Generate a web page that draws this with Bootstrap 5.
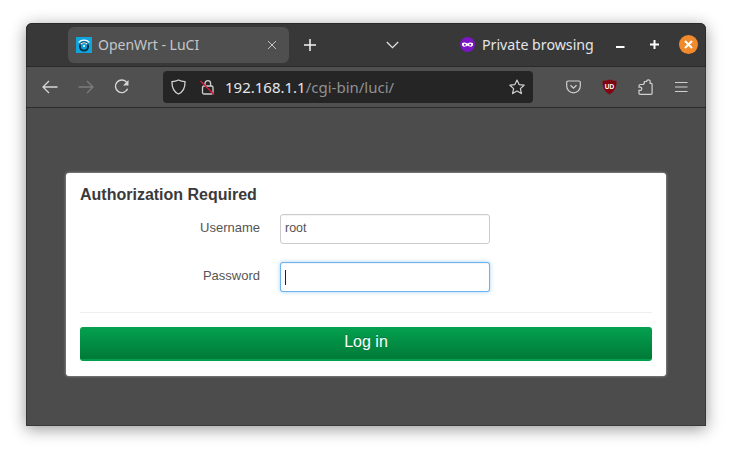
<!DOCTYPE html>
<html lang="en">
<head>
<meta charset="utf-8">
<title>OpenWrt - LuCI</title>
<link rel="stylesheet" href="https://cdn.jsdelivr.net/npm/bootstrap@5.3.0/dist/css/bootstrap.min.css">
<style>
html,body{height:100%;background:#fff;overflow:hidden}
body{padding:23px 26px 28px;font-family:"Liberation Sans",Arial,sans-serif}
.win{width:680px;height:403px;border-radius:6px 6px 0 0;box-shadow:0 3px 16px rgba(0,0,0,.42);overflow:hidden;background:#4c4c4c;outline:1px solid rgba(0,0,0,.25);outline-offset:-1px}
.tabbar{height:44px;background:#383838;padding:4px 8px 4px 42px;border-bottom:1px solid #2a2a2a;font-family:"Noto Sans","Open Sans",sans-serif}
.tabbar>*,.toolbar>*{flex-shrink:0}
.tabx{width:221px;height:36px;background:#4f4f4f;border-radius:6px;padding:0 12px 0 8px;color:#c4c6c8;font-size:14px}
.tabx svg.fav{margin-right:6px}
.plus{margin-left:15px}
.chev{margin-left:70px}
.priv{margin-left:61px;color:#e3e5e7;font-size:14.2px;gap:7px;width:135px}
.wctl{margin-left:21px}
.wbtn{width:34px;flex-shrink:0}
.closeb{width:19px;height:19px;border-radius:50%;background:#f08a2c;margin-left:-5px;flex-shrink:0}
.toolbar{height:41px;background:#505050;border-bottom:1px solid #2b2b2b}
.navgroup{width:137px;padding-left:16px;gap:20px}
.navgroup svg{flex-shrink:0}
.urlbar{width:370px;height:32px;background:#252525;border-radius:4px;padding:0 8px;font-family:"Noto Sans","Open Sans",sans-serif;font-size:15px;color:#8f9194}
.urlbar b{font-weight:400;color:#e6e7e9}
.urlbar svg{flex-shrink:0}
.urlbar svg.sh{margin-right:14px}
.urlbar svg.lk{margin-right:10px}
.tools{margin-left:33px}
.tools span{width:36px;flex-shrink:0}
.pane{height:318px;padding:65px 40px 0;background:#4c4c4c}
.auth{height:203px;background:#fff;border-radius:3px;padding:14px;box-shadow:0 0 3px rgba(255,255,255,.55);color:#404040}
.auth h3{font-size:16px;line-height:15px;font-weight:700;margin:0 0 12px;color:#3a3a3a}
.frow{height:30px;margin-bottom:18px;font-size:12.5px}
.lab{width:180px;text-align:right;color:#555;font-size:13px;padding-bottom:2px}
.fieldw{width:210px;margin-left:20px}
.auth .form-control{height:30px;border-radius:3px;padding:0 4px 2px;font-size:12.5px;color:#555;border-color:#ccc;font-family:inherit;min-height:0;box-shadow:inset 0 1px 1px rgba(0,0,0,.05)}
.auth .form-control.foc{border-color:rgba(82,168,236,.8);box-shadow:inset 0 1px 1px rgba(0,0,0,.05),0 0 4px rgba(82,168,236,.5)}
.caretx{position:absolute;left:5px;top:8px;width:1px;height:15px;background:#222}
.sep{margin:20px 0 14px;border:0;border-top:1px solid #eee;opacity:1;height:0}
.logbtn{width:100%;height:34px;padding:0 0 2px;border-radius:3px;border:0;color:#fff;font-size:16px;background:linear-gradient(#04a150,#007a38);border-bottom:2px solid #01a04f;text-shadow:0 -1px 0 rgba(0,0,0,.2)}
.logbtn:hover{color:#fff}
</style>
</head>
<body>
<div class="win d-flex flex-column">
  <div class="tabbar d-flex align-items-center">
    <div class="tabx d-flex align-items-center">
      <svg class="fav" width="16" height="16" viewBox="0 0 16 16"><rect width="16" height="16" fill="#10a4dc"/><circle cx="8" cy="9.6" r="4.4" fill="#0b4666" stroke="#082b40" stroke-width="1.2"/><circle cx="8" cy="9.6" r="3" fill="#0fa0d6"/><path d="M2.6 5.4C5.5 2.4 10.5 2.4 13.4 5.4M4.6 7.2C6.5 5.4 9.5 5.4 11.4 7.2" fill="none" stroke="#fff" stroke-width="1.3"/><circle cx="8" cy="9" r="1.1" fill="#fff"/></svg>
      <span class="flex-grow-1">OpenWrt - LuCI</span>
      <svg width="10" height="10" viewBox="0 0 10 10"><path d="M1 1l8 8M9 1l-8 8" stroke="#c4c6c8" stroke-width="1"/></svg>
    </div>
    <svg class="plus" width="12" height="12" viewBox="0 0 12 12"><path d="M6 0v12M0 6h12" stroke="#f4f4f4" stroke-width="1.5"/></svg>
    <svg class="chev" width="13" height="8" viewBox="0 0 13 8"><path d="M.8 1l5.700 5.700L12.200 1" fill="none" stroke="#e0e0e0" stroke-width="1.3"/></svg>
    <div class="priv d-flex align-items-center">
      <svg width="15" height="15" viewBox="0 0 15 15"><circle cx="7.5" cy="7.5" r="7.5" fill="#7a16c4"/><path d="M2 6.200c1.500-1 3.500-.8 5.500.2 2-1 4-1.200 5.500-.2.4 2-.5 3.600-2.400 3.600-1.300 0-2-1-3.100-1s-1.800 1-3.100 1C2.500 9.800 1.600 8.200 2 6.200z" fill="#fff"/><circle cx="4.900" cy="7.700" r="1" fill="#7a16c4"/><circle cx="10.100" cy="7.700" r="1" fill="#7a16c4"/></svg>
      <span class="text-nowrap">Private browsing</span>
    </div>
    <div class="wctl d-flex align-items-center">
      <span class="wbtn d-flex"><svg width="9" height="9" viewBox="0 0 9 9"><path d="M0 7h8.500" stroke="#fff" stroke-width="2"/></svg></span>
      <span class="wbtn d-flex"><svg width="9" height="9" viewBox="0 0 9 9"><path d="M4.500 0v9M0 4.500h9" stroke="#fff" stroke-width="2"/></svg></span>
      <span class="closeb d-flex align-items-center justify-content-center"><svg width="9" height="9" viewBox="0 0 9 9"><path d="M1 1l7 7M8 1l-7 7" stroke="#fff" stroke-width="2"/></svg></span>
    </div>
  </div>
  <div class="toolbar d-flex align-items-center">
    <div class="navgroup d-flex align-items-center">
      <svg width="16" height="14" viewBox="0 0 16 14"><path d="M15.500 7H1.200M7 1L1 7l6 6" fill="none" stroke="#d6d6d6" stroke-width="1.300"/></svg>
      <svg width="16" height="14" viewBox="0 0 16 14"><path d="M.5 7h14.300M9 1l6 6-6 6" fill="none" stroke="#7c7c7c" stroke-width="1.300"/></svg>
      <svg width="16" height="16" viewBox="0 0 16 16"><path d="M13.600 9.800A6.300 6.300 0 1 1 12.800 3.500" fill="none" stroke="#d6d6d6" stroke-width="1.400"/><path d="M14.500 1v5.500H9z" fill="#d6d6d6"/></svg>
    </div>
    <div class="urlbar d-flex align-items-center">
      <svg class="sh" width="15" height="16" viewBox="0 0 15 16"><path d="M7.500 1c2 1 4 1.500 6.500 1.700.2 5.500-1.800 10-6.500 12.300C2.800 12.700.8 8.200 1 2.700 3.500 2.500 5.500 2 7.500 1z" fill="none" stroke="#d0d0d0" stroke-width="1.300"/></svg>
      <svg class="lk" width="15" height="16" viewBox="0 0 15 16"><path d="M5 7V4.500a2.800 2.800 0 0 1 5.600 0V7" fill="none" stroke="#d0d0d0" stroke-width="1.300"/><rect x="2.500" y="7" width="10.500" height="8" rx="1.500" fill="none" stroke="#d0d0d0" stroke-width="1.300"/><path d="M.5 2l13.500 13.500" stroke="#d6193f" stroke-width="1.400"/></svg>
      <span class="flex-grow-1"><b>192.168.1.1</b>/cgi-bin/luci/</span>
      <svg width="16" height="16" viewBox="0 0 16 16"><path d="M8 1l2.100 4.600 5 .6-3.700 3.400 1 5L8 12.100l-4.400 2.500 1-5L.9 6.200l5-.6z" fill="none" stroke="#d0d0d0" stroke-width="1.200" stroke-linejoin="round"/></svg>
    </div>
    <div class="tools d-flex align-items-center">
      <span class="d-flex"><svg width="15" height="14" viewBox="0 0 15 14"><path d="M2 1h11a1.300 1.300 0 0 1 1.300 1.300V6a6.800 6.800 0 0 1-13.600 0V2.300A1.300 1.300 0 0 1 2 1z" fill="none" stroke="#d0d0d0" stroke-width="1.200"/><path d="M4.500 5.200l3 3 3-3" fill="none" stroke="#d0d0d0" stroke-width="1.300"/></svg></span>
      <span class="d-flex"><svg width="15" height="16" viewBox="0 0 15 16"><path d="M7.500 .5c2 .8 4 1.200 7 1.300.2 6-1.700 11-7 13.700C2.200 12.800.3 7.800.5 1.800c3-.1 5-.5 7-1.300z" fill="#800511"/><text x="7.500" y="9.800" font-size="6.500" font-weight="700" text-anchor="middle" fill="#fff" font-family="Liberation Sans">UD</text></svg></span>
      <span class="d-flex"><svg width="15" height="16" viewBox="0 0 15 16"><path d="M6.500 2.500h2.200a1 1 0 0 0 0 0c-.3-2.200 3.700-2.200 3.400 0v1.800h1a1 1 0 0 1 1 1v9a1 1 0 0 1-1 1H2a1 1 0 0 1-1-1v-3h1.300c2 0 2-3.200 0-3.200H1V7c0-1 .5-1.500 1.300-1.500h2.200c1.300 0 2-.7 2-3z" fill="none" stroke="#d0d0d0" stroke-width="1.200"/></svg></span>
      <span class="d-flex"><svg width="14" height="12" viewBox="0 0 14 12"><path d="M1 1.500h12.500M1 6h12.500M1 10.500h12.500" stroke="#d0d0d0" stroke-width="1.200"/></svg></span>
    </div>
  </div>
  <div class="pane">
    <form class="auth">
      <h3>Authorization Required</h3>
      <div class="frow d-flex align-items-center">
        <label class="lab" for="u">Username</label>
        <div class="fieldw"><input id="u" class="form-control" type="text" value="root"></div>
      </div>
      <div class="frow d-flex align-items-center">
        <label class="lab" for="p">Password</label>
        <div class="fieldw position-relative"><input id="p" class="form-control foc" type="password"><span class="caretx"></span></div>
      </div>
      <hr class="sep">
      <button type="button" class="btn logbtn">Log in</button>
    </form>
  </div>
</div>
</body>
</html>
